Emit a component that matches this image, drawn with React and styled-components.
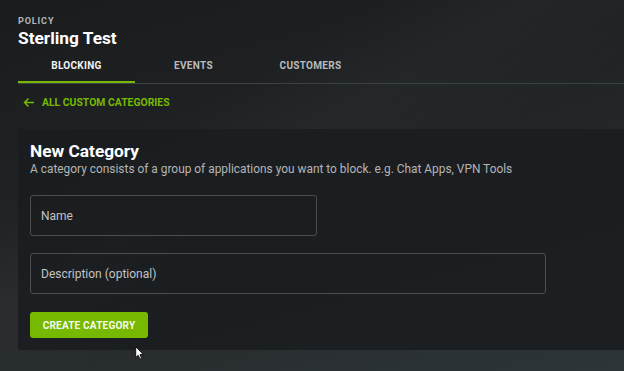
import React from "react";
import styled, { createGlobalStyle } from "styled-components";

const GlobalStyle = createGlobalStyle`
  html, body {
    margin: 0;
    padding: 0;
    background: #1d1f21;
  }
  body {
    font-family: Roboto, "Noto Sans", "Liberation Sans", sans-serif;
    -webkit-font-smoothing: antialiased;
  }
  * {
    box-sizing: border-box;
  }
`;

const tabs = ["BLOCKING", "EVENTS", "CUSTOMERS"];

const App = () => {
  return (
    <>
      <GlobalStyle />
      <Page>
        <Header>
          <Eyebrow>POLICY</Eyebrow>
          <PolicyName>Sterling Test</PolicyName>
        </Header>
        <TabBar>
          {tabs.map((tab, index) => (
            <Tab key={tab} active={index === 0}>
              {tab}
            </Tab>
          ))}
        </TabBar>
        <BackLink>
          <svg width="11" height="9" viewBox="0 0 11 9" fill="none">
            <path d="M10.5 4.5H1.5M5 1L1.5 4.5L5 8" stroke="#76b900" strokeWidth="1.6" strokeLinecap="round" strokeLinejoin="round" />
          </svg>
          ALL CUSTOM CATEGORIES
        </BackLink>
        <Card>
          <CardTitle>New Category</CardTitle>
          <CardText>A category consists of a group of applications you want to block. e.g. Chat Apps, VPN Tools</CardText>
          <Field width={287} placeholder="Name" />
          <Field width={516} placeholder="Description (optional)" />
          <CreateButton>CREATE CATEGORY</CreateButton>
          <Pointer width="10" height="14" viewBox="0 0 10 14">
            <path d="M0.7 0.7V11.6L3.2 9.3L5 13.2L6.7 12.4L5 8.6H8.4Z" fill="#ffffff" stroke="#111111" strokeWidth="1" strokeLinejoin="round" />
          </Pointer>
        </Card>
      </Page>
    </>
  );
};

const Page = styled.div`
  position: relative;
  width: 624px;
  height: 371px;
  overflow: hidden;
  padding: 15px 0 0 18px;
  background:
    linear-gradient(150deg, transparent 30%, rgba(255, 255, 255, 0.025) 42%, transparent 58%),
    linear-gradient(165deg, #1a1b1d 0%, #1f2224 35%, #262a2c 65%, #2d3538 100%);
`;

const Header = styled.div`
  display: flex;
  flex-direction: column;
  gap: 1px;
`;

const Eyebrow = styled.div`
  font-size: 9px;
  line-height: 12px;
  font-weight: 700;
  letter-spacing: 0.9px;
  color: #b5b7b8;
`;

const PolicyName = styled.div`
  font-size: 17.3px;
  line-height: 20px;
  font-weight: 700;
  color: #ffffff;
`;

const TabBar = styled.div`
  display: flex;
  height: 36px;
  border-bottom: 1px solid #3c4244;
`;

const Tab = styled.div`
  width: 117px;
  height: 35px;
  display: flex;
  align-items: center;
  justify-content: center;
  padding-top: 1px;
  font-size: 10px;
  font-weight: 700;
  letter-spacing: 0.3px;
  color: ${(props) => (props.active ? "#f2f2f2" : "#b9bbbc")};
  border-bottom: 2px solid ${(props) => (props.active ? "#76b900" : "transparent")};
`;

const BackLink = styled.div`
  display: flex;
  align-items: center;
  gap: 8px;
  margin: 11px 0 0 5px;
  height: 14px;
  font-size: 10.4px;
  font-weight: 700;
  letter-spacing: 0;
  color: #76b900;
`;

const Card = styled.div`
  position: relative;
  display: flex;
  flex-direction: column;
  align-items: flex-start;
  margin-top: 20px;
  height: 221px;
  padding: 12px 12px 0;
  background: rgba(26, 28, 30, 0.85);
  border-radius: 2px 0 0 2px;
`;

const CardTitle = styled.div`
  font-size: 17.3px;
  line-height: 20px;
  font-weight: 700;
  color: #ffffff;
`;

const CardText = styled.div`
  font-size: 11.9px;
  line-height: 16px;
  color: #b3b5b6;
  margin-bottom: 18px;
  white-space: nowrap;
`;

const Field = styled.input`
  width: ${(props) => props.width}px;
  height: 41px;
  margin-bottom: 17px;
  padding: 0 10px;
  background: transparent;
  border: 1px solid #4a4e50;
  border-radius: 3px;
  font-family: Roboto, "Noto Sans", sans-serif;
  font-size: 12px;
  color: #e0e0e0;
  outline: none;

  &::placeholder {
    color: #c2c4c5;
  }
`;

const CreateButton = styled.button`
  margin-top: 1px;
  width: 118px;
  height: 26px;
  border: none;
  border-radius: 3px;
  background: #76b900;
  color: #f4f9ec;
  font-family: Roboto, "Noto Sans", sans-serif;
  font-size: 10px;
  font-weight: 700;
  letter-spacing: 0.2px;
  padding: 0;
`;

const Pointer = styled.svg`
  position: absolute;
  left: 117px;
  top: 217px;
`;

export default App;
